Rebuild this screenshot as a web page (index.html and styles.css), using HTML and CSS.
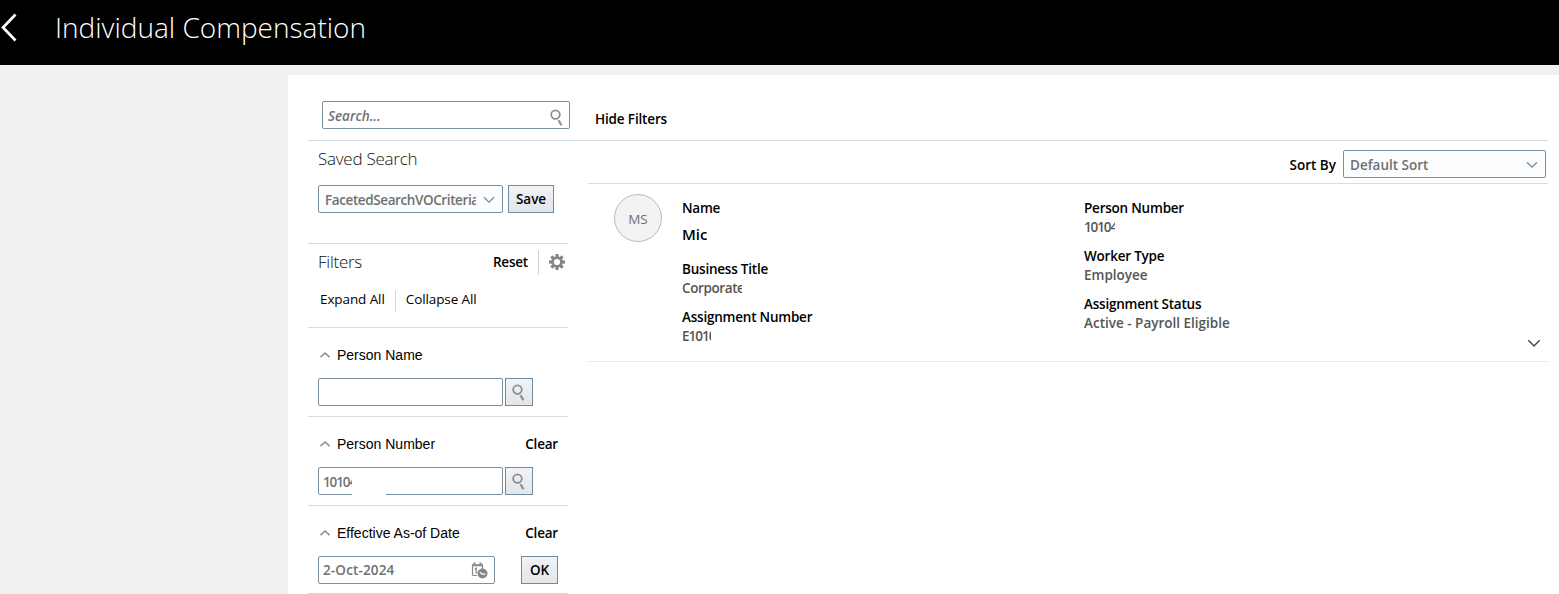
FILE: index.html
```html
<!DOCTYPE html>
<html lang="en">
<head>
    <meta charset="utf-8">
    <title>Individual Compensation</title>
    <link rel="stylesheet" href="styles.css">
</head>
<body>
    <svg width="0" height="0" style="display:none">
        <symbol id="lens" viewBox="0 0 14 18">
            <circle cx="5.5" cy="5.6" r="4.3" fill="none" stroke="#8a8f94" stroke-width="1.8"/>
            <path d="M8.6 11.2L11.4 16.2" fill="none" stroke="#8a8f94" stroke-width="2.2"/>
        </symbol>
        <symbol id="down" viewBox="0 0 12 8">
            <path d="M1 1.2L6 6.2L11 1.2" fill="none" stroke="currentColor" stroke-width="1.3"/>
        </symbol>
        <symbol id="up" viewBox="0 0 12 8">
            <path d="M1.5 6.2L6 2L10.5 6.2" fill="none" stroke="currentColor" stroke-width="1.6"/>
        </symbol>
    </svg>
    <header class="topbar">
        <svg class="back" width="17" height="30" viewBox="0 0 17 30"><path d="M15.5 1.5L3 14.5L15.5 27.5" fill="none" stroke="#fff" stroke-width="2.7"/></svg>
        <h1>Individual Compensation</h1>
    </header>
    <main class="panel">
        <div class="toolbar">
            <div class="search">
                <span>Search...</span>
                <svg width="14" height="18"><use href="#lens"/></svg>
            </div>
            <a class="hide-filters">Hide Filters</a>
        </div>
        <div class="content">
            <aside class="sidebar">
                <section class="saved">
                    <h2>Saved Search</h2>
                    <div class="row">
                        <div class="select saved-select"><span>FacetedSearchVOCriteria</span><svg width="12" height="8"><use href="#down"/></svg></div>
                        <button class="btn save">Save</button>
                    </div>
                </section>
                <section class="filters">
                    <div class="filters-head">
                        <h2>Filters</h2>
                        <a class="reset">Reset</a>
                        <span class="divider"></span>
                        <svg class="gear" width="18" height="18" viewBox="-9 -9 18 18">
                            <g fill="#82878c">
                                <rect x="-1.6" y="-8" width="3.2" height="16"/>
                                <rect x="-1.6" y="-8" width="3.2" height="16" transform="rotate(45)"/>
                                <rect x="-1.6" y="-8" width="3.2" height="16" transform="rotate(90)"/>
                                <rect x="-1.6" y="-8" width="3.2" height="16" transform="rotate(135)"/>
                                <circle r="5.8"/>
                            </g>
                            <circle r="3.1" fill="#fff"/>
                        </svg>
                    </div>
                    <div class="expand">
                        <a class="expand-all">Expand All</a>
                        <span class="divider blue"></span>
                        <a class="collapse-all">Collapse All</a>
                    </div>
                </section>
                <section class="facet">
                    <div class="facet-head"><svg width="12" height="8"><use href="#up"/></svg><h3>Person Name</h3></div>
                    <div class="row">
                        <div class="input"></div>
                        <button class="btn lens"><svg width="14" height="18"><use href="#lens"/></svg></button>
                    </div>
                </section>
                <section class="facet">
                    <div class="facet-head"><svg width="12" height="8"><use href="#up"/></svg><h3>Person Number</h3><a class="clear">Clear</a></div>
                    <div class="row">
                        <div class="input number"><span>10104</span></div>
                        <button class="btn lens"><svg width="14" height="18"><use href="#lens"/></svg></button>
                    </div>
                </section>
                <section class="facet date-facet">
                    <div class="facet-head"><svg width="12" height="8"><use href="#up"/></svg><h3>Effective As-of Date</h3><a class="clear">Clear</a></div>
                    <div class="row">
                        <div class="input date">
                            <span>2-Oct-2024</span>
                            <svg width="17" height="17" viewBox="0 0 17 17">
                                <path d="M1.5 13V3.5H11.5V7M1.5 13.5H6" fill="none" stroke="#82878c" stroke-width="1.2"/>
                                <path d="M1 3.3H12M3.5 .5V4M9.5 .5V4" stroke="#82878c" stroke-width="2"/>
                                <path d="M3.8 7.2L5.2 6.3V11.5" fill="none" stroke="#82878c" stroke-width="1.3"/>
                                <circle cx="11.5" cy="11.5" r="5" fill="#82878c"/>
                                <path d="M8.8 10.2L11.3 12.2H14.3" fill="none" stroke="#fff" stroke-width="1.2"/>
                            </svg>
                        </div>
                        <button class="btn ok">OK</button>
                    </div>
                </section>
            </aside>
            <section class="results">
                <div class="sort">
                    <label>Sort By</label>
                    <div class="select sort-select"><span>Default Sort</span><svg width="12" height="8"><use href="#down"/></svg></div>
                </div>
                <article class="person">
                    <div class="avatar">MS</div>
                    <dl class="col-left">
                        <dt>Name</dt><dd class="name">Mic</dd>
                        <dt>Business Title</dt><dd class="title">Corporate</dd>
                        <dt>Assignment Number</dt><dd class="asg">E1010</dd>
                    </dl>
                    <dl class="col-right">
                        <dt>Person Number</dt><dd class="num">10104</dd>
                        <dt>Worker Type</dt><dd>Employee</dd>
                        <dt>Assignment Status</dt><dd>Active - Payroll Eligible</dd>
                    </dl>
                    <svg class="more" width="14" height="9" viewBox="0 0 12 8"><use href="#down"/></svg>
                </article>
            </section>
        </div>
    </main>
</body>
</html>
```
FILE: styles.css
```css
* { box-sizing: border-box; }
body { margin: 0; height: 594px; overflow: hidden; background: #f0f0f0; color: #000; font: 600 13.5px/19px "Open Sans", "Noto Sans", sans-serif; }
h1, h2, h3, dl, dd { margin: 0; font-weight: inherit; }
svg { flex: none; display: block; }
.topbar { display: flex; height: 65px; background: #000; color: #fff; }
.back { margin-top: 13px; }
h1 { margin: 7px 0 0 38px; font-size: 28px; line-height: 40px; font-weight: 300; white-space: nowrap; }
.panel { margin: 10px 0 0 288px; height: 519px; padding: 0 11px 0 20px; background: #fff; }
.toolbar { display: flex; height: 66px; border-bottom: 1px solid #d3dde4; padding: 26px 0 0 14px; }
.search { display: flex; justify-content: space-between; width: 248px; height: 28px; border: 1px solid #7b909e; border-radius: 2px; padding: 5px 5px 0; color: #707070; font-style: italic; }
.search svg { margin-top: 2px; }
.hide-filters { margin: 9px 0 0 25px; letter-spacing: -.15px; }
.content { display: flex; gap: 20px; }
.sidebar { width: 260px; }
.sidebar section { border-bottom: 1px solid #d9d9d9; padding-left: 10px; }
h2 { font-size: 17px; line-height: 24px; font-weight: 300; letter-spacing: -.25px; color: #111; white-space: nowrap; }
.row { display: flex; }
.saved { height: 103px; padding-top: 6px; }
.saved .row { margin-top: 14px; gap: 5px; }
.select { display: flex; align-items: center; height: 28px; border: 1px solid #7b909e; border-radius: 2px; background: #fcfdfe; color: #707070; padding: 2px 7px 0 6px; }
.select span { flex: 1; overflow: hidden; white-space: nowrap; }
.select svg { color: #82878c; }
.saved-select { width: 185px; letter-spacing: -.4px; }
.saved-select span { margin-right: 7px; }
.btn { display: flex; align-items: center; justify-content: center; height: 28px; padding: 0; border: 1px solid #6f8ba3; background: linear-gradient(#f1f3f5, #e2e6e9); color: #000; font: inherit; }
.save { width: 46px; }
.filters { height: 84px; }
.filters-head { display: flex; height: 37px; padding-top: 6px; }
.reset { margin: 3px 10px 0 auto; letter-spacing: -.2px; }
.divider { width: 1px; height: 25px; background: #d0d2c0; }
.gear { margin: 3px 2px 0 9px; }
.expand { display: flex; font-weight: 400; letter-spacing: -.1px; padding: 9px 0 0 2px; }
.expand .blue { height: 22px; background: #ccd8e0; margin: 0 10px; }
.facet { height: 89px; padding-top: 18px; }
.facet-head { display: flex; height: 18px; line-height: 18px; }
.facet-head svg { margin: 5px 6px 0 1px; color: #8a8f94; }
.facet-head .clear { margin: 0 10px 0 auto; letter-spacing: -.2px; }
h3 { font: 400 14px/18px "Liberation Sans", Arial, sans-serif; white-space: nowrap; }
.facet .row { margin-top: 14px; gap: 2px; }
.input { position: relative; width: 185px; height: 28px; border: 1px solid #7b909e; border-radius: 2px; padding: 5px 4px 0; color: #707070; }
.number span { display: block; width: 29px; overflow: hidden; letter-spacing: -1.1px; }
.number::after { content: ""; position: absolute; left: 33px; top: 5px; width: 34px; height: 24px; background: #fff; }
.lens { width: 28px; padding-top: 1px; }
.date { display: flex; justify-content: space-between; width: 177px; padding: 4px 6px 0 4px; letter-spacing: .15px; }
.date svg { margin-top: 1px; }
.ok { width: 37px; margin-left: 24px; }
.date-facet { height: 88px; }
.results { width: 960px; }
.sort { display: flex; justify-content: flex-end; height: 43px; padding: 9px 2px 0 0; border-bottom: 1px solid #d3dde4; }
.sort label { margin: 6px 7px 0 0; }
.sort-select { width: 203px; }
.person { display: flex; height: 178px; padding-left: 26px; border-bottom: 1px solid #e9ecee; }
.avatar { width: 48px; height: 48px; margin: 10px 20px 0 0; border: 1px solid #bababa; border-radius: 50%; background: #f3f3f3; color: #707070; font-weight: 400; line-height: 49px; text-align: center; }
dl { padding-top: 15px; white-space: nowrap; }
dt { letter-spacing: -.22px; }
.col-left { width: 402px; }
.col-right { flex: 1; }
dd { color: #555; margin-bottom: 10px; overflow: hidden; }
.name { width: 25px; margin: 6px 0 15px; color: #000; font-size: 15px; line-height: 21px; }
.title { width: 60px; letter-spacing: -.4px; }
.asg { width: 29px; letter-spacing: -1px; }
.num { width: 31px; letter-spacing: -1.1px; }
.more { margin: 155px 7px 0 0; color: #444; }
```
